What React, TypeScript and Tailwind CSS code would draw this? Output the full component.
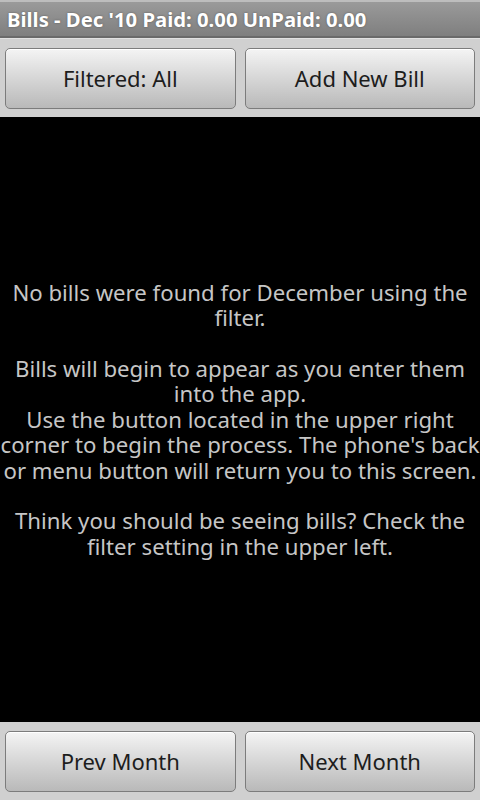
import React from 'react';

const font = { fontFamily: '"Noto Sans", "Open Sans", "DejaVu Sans", sans-serif' };

interface BarButtonProps {
  label: string;
}

const BarButton: React.FC<BarButtonProps> = ({ label }) => (
  <button className="flex-1 h-[61px] rounded-[5px] border border-[#7c7c7c] bg-gradient-to-b from-[#f4f4f4] to-[#b9b9b9] text-[22px] text-[#1d1d1d] shadow-[inset_0_1px_0_#ffffff]">
    {label}
  </button>
);

const lines = [
  'No bills were found for December using the',
  'filter.',
  '',
  'Bills will begin to appear as you enter them',
  'into the app.',
  'Use the button located in the upper right',
  "corner to begin the process. The phone's back",
  'or menu button will return you to this screen.',
  '',
  'Think you should be seeing bills? Check the',
  'filter setting in the upper left.',
];

export default function App() {
  return (
    <div className="flex flex-col h-[800px] w-[480px] bg-black" style={font}>
      <header className="h-[38px] flex items-center px-[7px] bg-gradient-to-b from-[#9a9a9a] to-[#7f7f7f] border-t-2 border-t-[#bdbdbd] border-b-2 border-b-[#6a6a6a]">
        <span className="text-[20.3px] font-bold text-white [text-shadow:0_0_2px_#555]">
          Bills - Dec '10 Paid: 0.00 UnPaid: 0.00
        </span>
      </header>

      <div className="flex gap-[9px] px-[5px] pt-[9px] pb-[8px] bg-[#d0d0d0] border-t border-t-[#e2e2e2]">
        <BarButton label="Filtered: All" />
        <BarButton label="Add New Bill" />
      </div>

      <main className="flex-1 flex items-center justify-center">
        <p className="text-center text-[22.2px] leading-[25.4px] text-[#c6c6c6] whitespace-nowrap">
          {lines.map((line, i) => (
            <React.Fragment key={i}>
              {line || '\u00a0'}
              <br />
            </React.Fragment>
          ))}
        </p>
      </main>

      <div className="flex gap-[9px] px-[5px] pt-[9px] pb-[8px] bg-[#d0d0d0]">
        <BarButton label="Prev Month" />
        <BarButton label="Next Month" />
      </div>
    </div>
  );
}
